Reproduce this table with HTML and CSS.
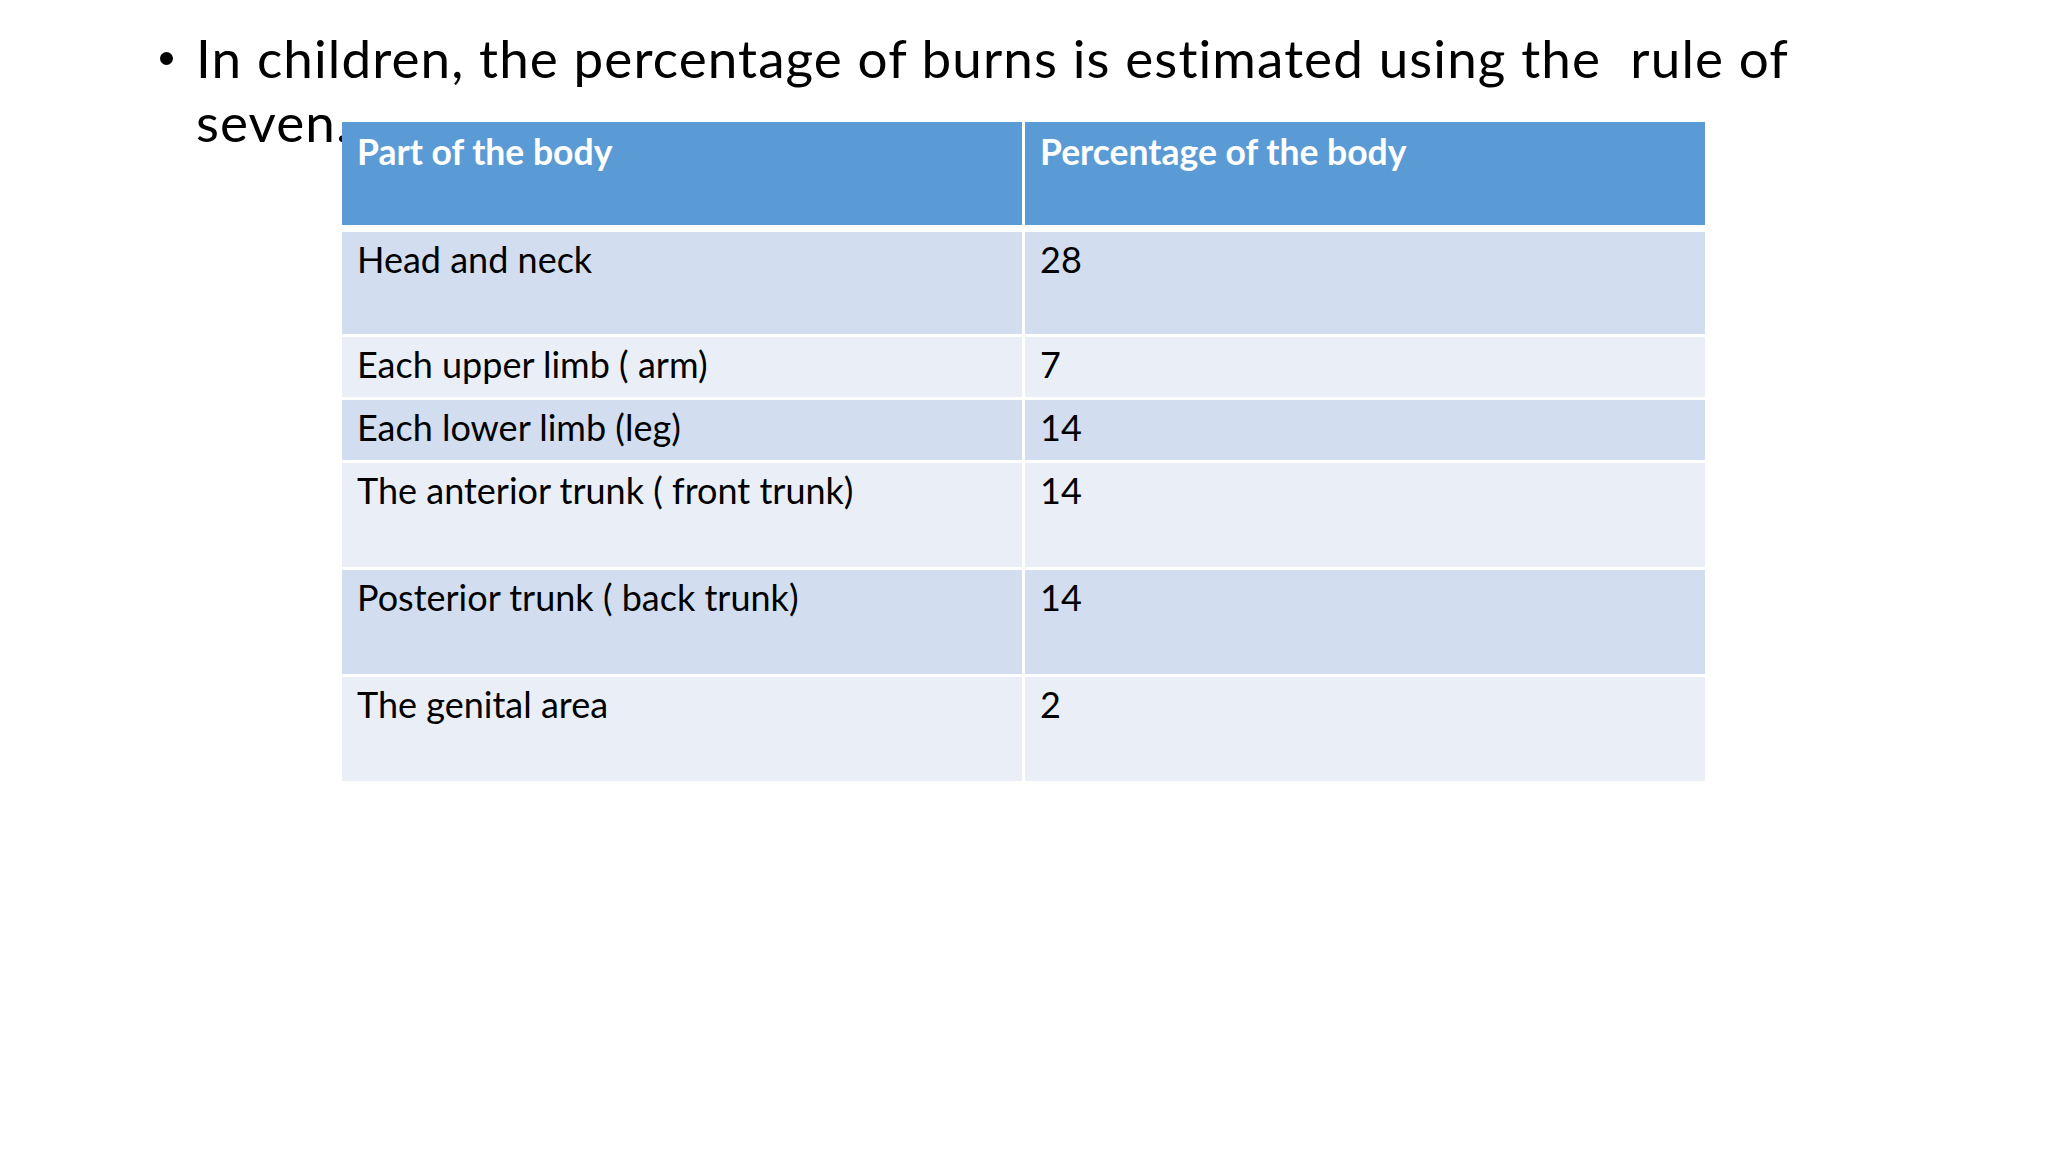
FILE: index.html
```html
<!DOCTYPE html>
<html lang="en">
<head>
<meta charset="utf-8">
<title>Rule of seven</title>
<link rel="stylesheet" href="styles.css">
</head>
<body>
<div class="slide">
  <ul class="bullets">
    <li><span class="dot"></span><span class="txt">In children, the percentage of burns is estimated using the&nbsp; rule of seven.</span></li>
  </ul>
  <div class="tbl">
    <div class="cell head">Part of the body</div>
    <div class="cell head">Percentage of the body</div>
    <div class="cell dark">Head and neck</div>
    <div class="cell dark">28</div>
    <div class="cell light">Each upper limb ( arm)</div>
    <div class="cell light">7</div>
    <div class="cell dark">Each lower limb (leg)</div>
    <div class="cell dark">14</div>
    <div class="cell light">The anterior trunk ( front trunk)</div>
    <div class="cell light">14</div>
    <div class="cell dark">Posterior trunk ( back trunk)</div>
    <div class="cell dark">14</div>
    <div class="cell light">The genital area</div>
    <div class="cell light">2</div>
  </div>
</div>
</body>
</html>
```
FILE: styles.css
```css
html, body {
  margin: 0;
  padding: 0;
  background: #ffffff;
}
body {
  width: 2048px;
  height: 1152px;
  overflow: hidden;
  font-family: Lato, "Open Sans", "Noto Sans", sans-serif;
  color: #000;
}
.slide {
  display: grid;
  width: 2048px;
  height: 1152px;
}
.bullets, .tbl {
  grid-area: 1 / 1;
}
.bullets {
  list-style: none;
  margin: 0;
  padding: 26px 0 0 160px;
  width: 1690px;
  align-self: start;
}
.bullets li {
  display: flex;
  align-items: flex-start;
  font-size: 53px;
  line-height: 64px;
  letter-spacing: 1.1px;
}
.dot {
  flex: none;
  width: 13px;
  height: 13px;
  border-radius: 50%;
  background: #000;
  margin-top: 26px;
}
.txt {
  margin-left: 23px;
}
.tbl {
  align-self: start;
  justify-self: start;
  margin: 122px 0 0 342px;
  display: grid;
  grid-template-columns: 680px 680px;
  grid-template-rows: 107px 102px 60px 60px 104px 104px 104px;
  gap: 3px;
  background: #ffffff;
}
.cell {
  box-sizing: border-box;
  padding: 7px 16px 0 15px;
  font-size: 36px;
  line-height: 41px;
}
.head {
  background: #5b9bd5;
  color: #ffffff;
  font-weight: 700;
  font-size: 35.5px;
  padding-top: 9px;
  border-bottom: 4px solid #ffffff;
}
.dark {
  background: #d2deef;
}
.light {
  background: #eaeff7;
}
```
